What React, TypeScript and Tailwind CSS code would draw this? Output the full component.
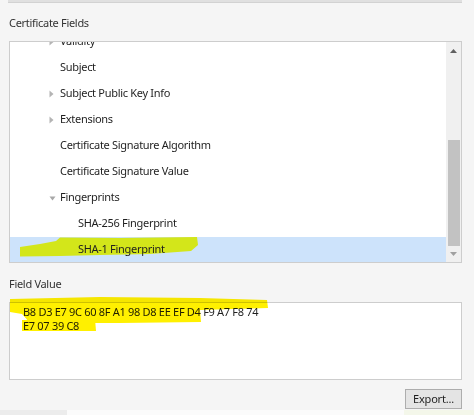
import React from "react";

type Node = {
  label: string;
  level: 1 | 2;
  toggle?: "closed" | "open";
  selected?: boolean;
};

const fields: Node[] = [
  { label: "Validity", level: 1, toggle: "closed" },
  { label: "Subject", level: 1 },
  { label: "Subject Public Key Info", level: 1, toggle: "closed" },
  { label: "Extensions", level: 1, toggle: "closed" },
  { label: "Certificate Signature Algorithm", level: 1 },
  { label: "Certificate Signature Value", level: 1 },
  { label: "Fingerprints", level: 1, toggle: "open" },
  { label: "SHA-256 Fingerprint", level: 2 },
  { label: "SHA-1 Fingerprint", level: 2, selected: true },
];

const font = { fontFamily: '"Segoe UI", "Noto Sans", "Open Sans", sans-serif' };

function Toggle({ kind }: { kind?: "closed" | "open" }) {
  if (!kind) return <span className="w-[11px] shrink-0" />;
  return (
    <span className="w-[11px] shrink-0 flex items-center">
      {kind === "closed" ? (
        <svg width="5" height="8" viewBox="0 0 5 8">
          <path d="M0.5 0.5 L4.5 4 L0.5 7.5 Z" fill="#b4b4b4" />
        </svg>
      ) : (
        <svg width="7" height="5" viewBox="0 0 7 5">
          <path d="M0.5 0.5 L6.5 0.5 L3.5 4.5 Z" fill="#a8a8a8" />
        </svg>
      )}
    </span>
  );
}

function TreeRow({ node }: { node: Node }) {
  return (
    <div
      className={`relative h-[26px] flex items-center ${node.level === 1 ? "pl-[39px]" : "pl-[57px]"} ${
        node.selected ? "bg-[#cde3fb]" : ""
      }`}
    >
      {node.selected && (
        <svg className="absolute left-0 top-0" width="200" height="26" viewBox="0 0 200 26">
          <path
            d="M10 10 L30 7 L46 4 L50 0.5 L110 1 L187 0 L188 8 L181 14 L140 17 L90 18 L50 19 L10 19.5 Z"
            fill="#d3e61a"
          />
        </svg>
      )}
      <Toggle kind={node.toggle} />
      <span className="relative -mt-[1px] text-[11px] tracking-[-0.3px] text-[#1f1f1f] whitespace-nowrap">
        {node.label}
      </span>
    </div>
  );
}

function Scrollbar() {
  return (
    <div className="w-[15px] shrink-0 bg-[#f0f0f0] flex flex-col items-center">
      <div className="h-[17px] flex items-center">
        <svg width="7" height="4" viewBox="0 0 7 4">
          <path d="M0 4 L3.5 0 L7 4 Z" fill="#606060" />
        </svg>
      </div>
      <div className="mt-[81px] w-[12px] h-[106px] bg-[#c2c2c2]" />
      <div className="flex-1 flex items-center">
        <svg width="7" height="4" viewBox="0 0 7 4">
          <path d="M0 0 L7 0 L3.5 4 Z" fill="#a0a0a0" />
        </svg>
      </div>
    </div>
  );
}

export default function App() {
  return (
    <div className="relative w-[474px] h-[415px] overflow-hidden bg-[#f5f5f5] flex flex-col" style={font}>
      <div className="ml-[8px] w-[454px] h-[3px] bg-[#e0e0e0] border-b border-[#d2d2d2]" />

      <div className="ml-[9px] mt-[12px] h-[16px] leading-[16px] text-[11px] tracking-[-0.3px] text-[#333]">
        Certificate Fields
      </div>

      <div className="ml-[9px] mt-[10px] w-[453px] h-[222px] border border-[#cdcdcd] bg-white flex overflow-hidden">
        <div className="flex-1 overflow-hidden">
          <div className="-mt-[13px]">
            {fields.map((n) => (
              <TreeRow key={n.label} node={n} />
            ))}
          </div>
        </div>
        <Scrollbar />
      </div>

      <div className="ml-[9px] mt-[13px] h-[16px] leading-[16px] text-[11px] tracking-[-0.3px] text-[#333]">
        Field Value
      </div>

      <div className="ml-[9px] mt-[10px] w-[453px] h-[78px] border border-[#cdcdcd] bg-white pl-[13px] pt-[2px] text-[11px] tracking-[-0.3px] leading-[14px] text-[#1f1f1f]">
        <div>B8 D3 E7 9C 60 8F A1 98 D8 EE EF D4 F9 A7 F8 74</div>
        <div>E7 07 39 C8</div>
      </div>

      <div className="mt-[9px] flex justify-end pr-[12px]">
        <button className="w-[57px] h-[20px] border border-[#adadad] bg-[#e4e4e4] text-[11px] tracking-[-0.2px] leading-[16px] text-[#1f1f1f]">
          Export...
        </button>
      </div>

      <div className="mt-[1px] h-[5px] flex">
        <div className="w-[67px] bg-[#ececec]" />
        <div className="flex-1 bg-[#fbfbfb]" />
        <div className="w-[70px] bg-[#f4f7ea]" />
      </div>

      {/* marker stroke across the value */}
      <svg
        className="absolute left-0 top-0 pointer-events-none mix-blend-multiply"
        width="474"
        height="415"
        viewBox="0 0 474 415"
      >
        <path
          d="M10 299 L100 297 L200 298 L267 300 L268 308 L200 310 L201 322 L120 323 L30 323 L22 314 L10 312 Z"
          fill="#fff000"
        />
        <path d="M22 320 L95 319 L96 331 L22 331 Z" fill="#fff000" />
      </svg>
    </div>
  );
}
